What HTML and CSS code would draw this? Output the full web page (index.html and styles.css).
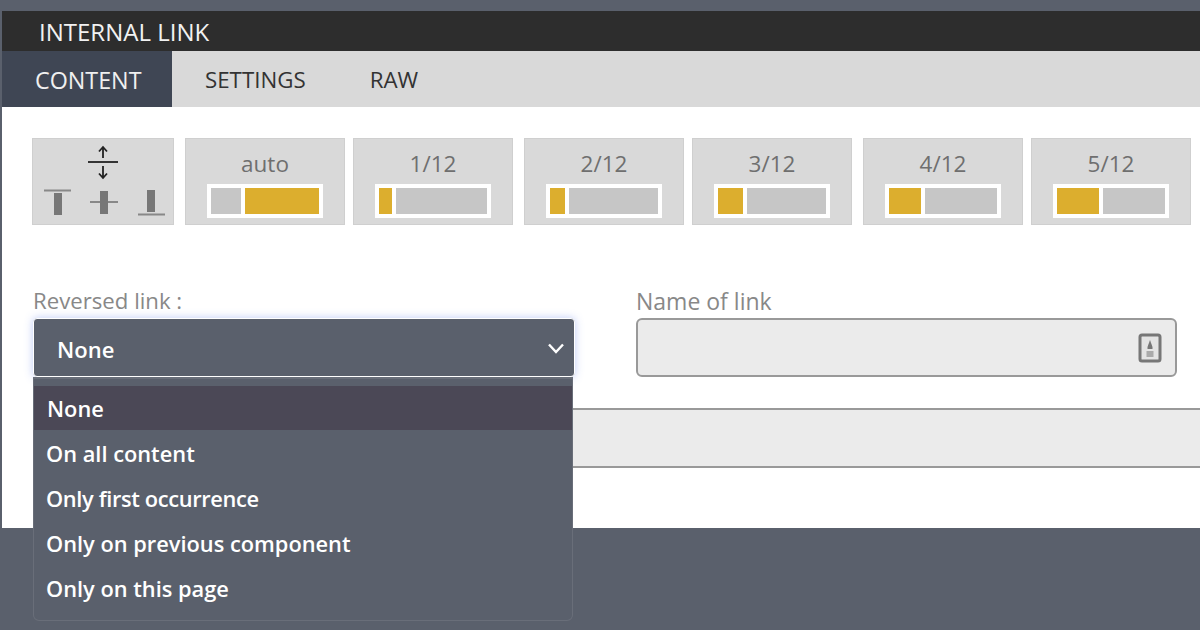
FILE: index.html
```html
<!DOCTYPE html>
<html lang="en">
<head>
<meta charset="utf-8">
<title>Internal link</title>
<link rel="stylesheet" href="styles.css">
</head>
<body>
<main class="window">
  <header class="title">INTERNAL LINK</header>
  <nav class="tabs">
    <a class="tab tab-active">CONTENT</a>
    <a class="tab tab-settings">SETTINGS</a>
    <a class="tab tab-raw">RAW</a>
  </nav>
  <section class="content">
    <div class="cards">
      <div class="card card-align">
        <svg class="align-icon" width="142" height="87" viewBox="0 0 142 87">
          <g fill="none" stroke="#222" stroke-width="1.800">
            <path d="M56 24H86"/>
            <path d="M71 20V9M67 13.500 71 9l4 4.500"/>
            <path d="M71 28v12M67 35.500 71 40l4-4.500"/>
          </g>
          <g fill="#777">
            <rect x="12" y="51.500" width="27" height="2" fill="#888"/>
            <rect x="22" y="55" width="8" height="22"/>
            <rect x="58" y="63" width="28" height="2" fill="#888"/>
            <rect x="68" y="53" width="8" height="23"/>
            <rect x="115" y="52" width="8" height="22"/>
            <rect x="106" y="75.500" width="27" height="2" fill="#888"/>
          </g>
        </svg>
      </div>
      <div class="card">
        <span class="card-label">auto</span>
        <div class="bar"><i class="seg seg-grey" style="width:30px"></i><i class="seg seg-gold" style="width:74px"></i></div>
      </div>
      <div class="card">
        <span class="card-label">1/12</span>
        <div class="bar"><i class="seg seg-gold" style="width:13px"></i><i class="seg seg-grey" style="width:91px"></i></div>
      </div>
      <div class="card card-wide">
        <span class="card-label">2/12</span>
        <div class="bar"><i class="seg seg-gold" style="width:15px"></i><i class="seg seg-grey" style="width:89px"></i></div>
      </div>
      <div class="card">
        <span class="card-label">3/12</span>
        <div class="bar"><i class="seg seg-gold" style="width:25px"></i><i class="seg seg-grey" style="width:79px"></i></div>
      </div>
      <div class="card card-wide">
        <span class="card-label">4/12</span>
        <div class="bar"><i class="seg seg-gold" style="width:32px"></i><i class="seg seg-grey" style="width:72px"></i></div>
      </div>
      <div class="card">
        <span class="card-label">5/12</span>
        <div class="bar"><i class="seg seg-gold" style="width:42px"></i><i class="seg seg-grey" style="width:62px"></i></div>
      </div>
    </div>

    <div class="fields">
      <div class="field field-select">
        <label class="field-label">Reversed link :</label>
        <div class="select">
          <span>None</span>
          <svg class="chevron" width="18" height="11" viewBox="0 0 18 11"><path d="M2 1.500 9 9l7-7.500" fill="none" stroke="#fff" stroke-width="2.400"/></svg>
        </div>
        <ul class="menu">
          <li class="menu-item menu-selected">None</li>
          <li class="menu-item">On all content</li>
          <li class="menu-item menu-item-tight">Only first occurrence</li>
          <li class="menu-item">Only on previous component</li>
          <li class="menu-item">Only on this page</li>
        </ul>
      </div>
      <div class="field field-name">
        <label class="field-label">Name of link</label>
        <div class="input">
          <svg width="24" height="30" viewBox="0 0 24 30">
            <rect x="2" y="2" width="20" height="26" rx="2" fill="#e4e4e4" stroke="#777" stroke-width="3"/>
            <path d="M12 7l2.500 7v2h-5v-2z" fill="#777"/>
            <rect x="8.500" y="18" width="7" height="6" fill="#aaa"/>
          </svg>
        </div>
      </div>
    </div>
    <div class="wide-input"></div>
  </section>
</main>
</body>
</html>
```
FILE: styles.css
```css
* { box-sizing: border-box; }
html, body { margin: 0; height: 100%; }
body {
  background: #5a606c;
  font-family: "Open Sans", "Noto Sans", sans-serif;
  overflow: hidden;
  padding: 11px 0 0 2px;
}
.window { width: 1198px; }
.title {
  height: 40px;
  background: #2d2d2d;
  color: #f2f2f2;
  font-size: 24px;
  line-height: 42px;
  padding-left: 37px;
}
.tabs {
  display: flex;
  height: 56px;
  background: #d9d9d9;
}
.tab {
  font-size: 22.300px;
  line-height: 58px;
  color: #333;
}
.tab-active {
  width: 170px;
  padding-left: 33px;
  background: #3f4654;
  color: #f0f0f0;
  font-size: 23.300px;
}
.tab-settings { margin-left: 33px; }
.tab-raw { margin-left: 64px; }
.content {
  background: #fff;
  height: 421px;
  padding: 31px 0 0 30px;
}
.cards { display: flex; gap: 8px; }
.card {
  width: 160px;
  height: 87px;
  background: #d9d9d9;
  border: 1px solid #cfcfcf;
  display: flex;
  flex-direction: column;
  align-items: center;
  padding-top: 11px;
}
.card-wide { margin-left: 3px; }
.card-align { width: 142px; padding: 0; margin-right: 3px; }
.card-align svg { margin: -1px; flex: none; }
.card-label {
  font-size: 22.500px;
  line-height: 28px;
  color: #6f6f6f;
  height: 34px;
}
.bar {
  width: 116px;
  height: 34px;
  background: #fff;
  padding: 4px;
  display: flex;
  gap: 4px;
}
.seg { display: block; height: 26px; }
.seg-gold { background: #dcae2e; }
.seg-grey { background: #c6c6c6; }
.fields {
  display: flex;
  margin-top: 60px;
}
.field { position: relative; }
.field-select { width: 604px; padding-left: 1px; }
.field-name { width: 541px; }
.field-label {
  display: block;
  font-size: 22.200px;
  line-height: 32px;
  height: 33px;
  color: #888;
}
.field-name .field-label { font-size: 23px; }
.select {
  width: 542px;
  height: 59px;
  background: #5a606c;
  border: 1px solid #fff;
  border-radius: 4px;
  box-shadow: 0 0 9px rgba(110, 140, 240, .45);
  color: #fff;
  font-size: 22px;
  font-weight: 600;
  display: flex;
  align-items: center;
  justify-content: space-between;
  padding: 2px 9px 0 23px;
}
.menu {
  position: absolute;
  left: 1px;
  top: 92px;
  width: 540px;
  height: 244px;
  margin: 0;
  padding: 7px 0 0;
  list-style: none;
  background: #5a606c;
  border: 1px solid #696e79;
  border-top: 2px solid #696e79;
  border-radius: 0 0 6px 6px;
  z-index: 2;
}
.menu-item {
  height: 45px;
  line-height: 47px;
  padding-left: 12px;
  color: #fff;
  font-size: 21.800px;
  font-weight: 600;
}
.menu-item-tight { letter-spacing: -.35px; }
.menu-selected {
  background: #4b4856;
  height: 44px;
  line-height: 46px;
  padding-left: 13px;
}
.input {
  height: 59px;
  background: #ebebeb;
  border: 2px solid #999;
  border-radius: 6px;
  display: flex;
  align-items: center;
  justify-content: flex-end;
  padding-right: 13px;
}
.wide-input {
  height: 60px;
  margin-top: 31px;
  margin-left: 1px;
  background: #ebebeb;
  border-top: 2px solid #999;
  border-bottom: 2px solid #999;
}
```
